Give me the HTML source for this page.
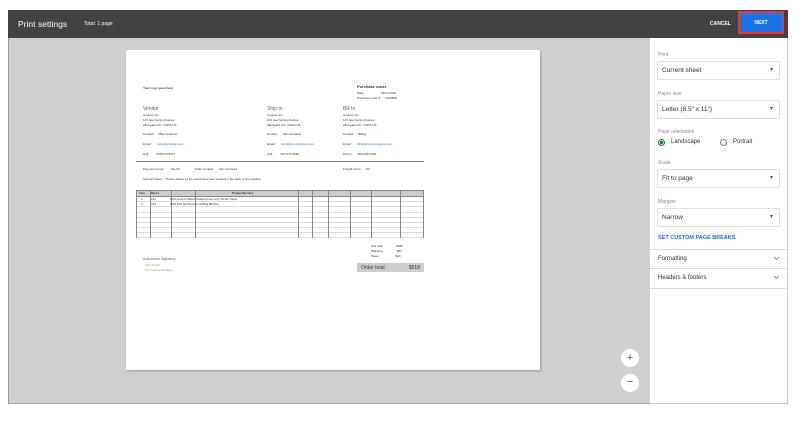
<!DOCTYPE html><html><head><style>
*{margin:0;padding:0;box-sizing:border-box}
body{width:801px;height:421px;background:#fff;font-family:"Liberation Sans",sans-serif;position:relative;overflow:hidden}
.a{position:absolute}
.t{font-size:3px;color:#333;white-space:nowrap}
.l{font-size:5px;color:#888}
.sel{position:absolute;left:657px;width:123px;height:19px;border:1px solid #e0e0e0;border-radius:2px;font-size:6.5px;color:#333;padding:5px 4px}
.sel:after{content:"▾";position:absolute;right:6px;top:4px;font-size:6px;color:#555}
</style></head><body>
<div class="a" style="left:8px;top:10px;width:780px;height:28px;background:#424242"></div>
<div class="a" style="left:18px;top:19px;color:#fff;font-size:8.5px">Print settings</div>
<div class="a" style="left:84px;top:21px;color:#fff;font-size:5px">Total: 1 page</div>
<div class="a" style="left:710px;top:21px;color:#fff;font-size:5px;font-weight:bold">CANCEL</div>
<div class="a" style="left:738px;top:11px;width:46px;height:23px;background:#1a73e8;border:2px solid #e53935;color:#fff;font-size:5px;font-weight:bold;display:flex;align-items:center;justify-content:center">NEXT</div>
<div class="a" style="left:8px;top:38px;width:642px;height:366px;background:#d0d0d0;border-left:1px solid #999;border-bottom:1px solid #aaa"></div>
<div class="a" style="left:650px;top:38px;width:138px;height:366px;background:#fff;border-right:1px solid #ccc;border-bottom:1px solid #ccc"></div>
<div class="a" style="left:126px;top:50px;width:414px;height:320px;background:#fff;box-shadow:1px 1px 2px #999"></div>
<div class="a t" style="left:143px;top:86px;font-weight:bold">Your Logo goes here</div>
<div class="a t" style="left:357px;top:84px;font-weight:bold;font-size:4px">Purchase order</div>
<div class="a t" style="left:357px;top:91px">Date:&nbsp;&nbsp;&nbsp;&nbsp;&nbsp;&nbsp;&nbsp;&nbsp;&nbsp;&nbsp;&nbsp;&nbsp;&nbsp;&nbsp;&nbsp;&nbsp;&nbsp;&nbsp;&nbsp; 04/17/2019</div>
<div class="a t" style="left:357px;top:96px">Purchase order #:&nbsp;&nbsp;&nbsp;&nbsp; 1365598</div>
<div class="a t" style="left:143px;top:106px;font-size:5px;color:#666">Vendor</div>
<div class="a t" style="left:267px;top:106px;font-size:5px;color:#666">Ship to</div>
<div class="a t" style="left:343px;top:106px;font-size:5px;color:#666">Bill to</div>
<div class="a t" style="left:143px;top:113px;line-height:5px">Amazon Inc.<br>123 new Spring Avenue<br>Allengairs,CO, 23494,US</div>
<div class="a t" style="left:267px;top:113px;line-height:5px">Amazon Inc.<br>123 new Spring Avenue<br>Allengairs,CO, 23494,US</div>
<div class="a t" style="left:343px;top:113px;line-height:5px">Amazon Inc.<br>123 new Spring Avenue<br>Allengairs,CO, 23494,US</div>
<div class="a t" style="left:143px;top:132px">Contact:&nbsp;&nbsp;&nbsp;&nbsp; Mike Andrews</div>
<div class="a t" style="left:267px;top:132px">Contact:&nbsp;&nbsp;&nbsp;&nbsp; John Andrews</div>
<div class="a t" style="left:343px;top:132px">Contact:&nbsp;&nbsp;&nbsp;&nbsp; Billing</div>
<div class="a t" style="left:143px;top:142px">Email:&nbsp;&nbsp;&nbsp;&nbsp;&nbsp;&nbsp; <span style="color:#36c">mike@amazon.com</span></div>
<div class="a t" style="left:267px;top:142px">Email:&nbsp;&nbsp;&nbsp;&nbsp;&nbsp;&nbsp; <span style="color:#36c">john@yourcompany.com</span></div>
<div class="a t" style="left:343px;top:142px">Email:&nbsp;&nbsp;&nbsp;&nbsp;&nbsp;&nbsp; <span style="color:#36c">billing@yourcompany.com</span></div>
<div class="a t" style="left:143px;top:152px">Cell:&nbsp;&nbsp;&nbsp;&nbsp;&nbsp;&nbsp;&nbsp;&nbsp; 568-679-5667</div>
<div class="a t" style="left:267px;top:152px">Cell:&nbsp;&nbsp;&nbsp;&nbsp;&nbsp;&nbsp;&nbsp;&nbsp; 567-675-4560</div>
<div class="a t" style="left:343px;top:152px">Phone:&nbsp;&nbsp;&nbsp;&nbsp;&nbsp; 580-665-5665</div>
<div class="a" style="left:136px;top:161px;width:288px;height:1px;background:#777"></div>
<div class="a t" style="left:143px;top:167px">Payment terms:&nbsp;&nbsp;&nbsp;&nbsp;&nbsp;&nbsp;&nbsp; Net 30&nbsp;&nbsp;&nbsp;&nbsp;&nbsp;&nbsp;&nbsp;&nbsp;&nbsp;&nbsp;&nbsp;&nbsp;&nbsp;&nbsp;&nbsp;&nbsp;&nbsp; Order Contact:&nbsp;&nbsp;&nbsp;&nbsp; John Andrews</div>
<div class="a t" style="left:343px;top:167px">Freight terms:&nbsp;&nbsp;&nbsp;&nbsp; NA</div>
<div class="a t" style="left:143px;top:177px">Special Notes:&nbsp;&nbsp;&nbsp; Please deliver to the warehouse door located in the back of the building</div>
<div class="a" style="left:136px;top:190px;width:288px;height:48px;border:0.5px solid #888">
<div style="height:6px;background:#ccc;border-bottom:0.5px solid #888"></div>
<div style="height:42px;background:repeating-linear-gradient(#fff 0 4.6px,#bbb 4.6px 5.1px)"></div>
</div>
<div class="a" style="left:150px;top:190px;width:1px;height:48px;background:#888"></div>
<div class="a" style="left:171px;top:190px;width:1px;height:48px;background:#888"></div>
<div class="a" style="left:195px;top:190px;width:1px;height:48px;background:#888"></div>
<div class="a" style="left:298px;top:190px;width:1px;height:48px;background:#888"></div>
<div class="a" style="left:312px;top:190px;width:1px;height:48px;background:#888"></div>
<div class="a" style="left:328px;top:190px;width:1px;height:48px;background:#888"></div>
<div class="a" style="left:350px;top:190px;width:1px;height:48px;background:#888"></div>
<div class="a" style="left:371px;top:190px;width:1px;height:48px;background:#888"></div>
<div class="a" style="left:400px;top:190px;width:1px;height:48px;background:#888"></div>
<div class="a t" style="left:139px;top:191px;font-size:2.8px;font-weight:bold">Line&nbsp;&nbsp;&nbsp;&nbsp;&nbsp;&nbsp;&nbsp; Item #</div>
<div class="a t" style="left:232px;top:191px;font-size:2.8px;font-weight:bold">Product/Service</div>
<div class="a t" style="left:141px;top:197px;font-size:2.8px;line-height:4.5px">1&nbsp;&nbsp;&nbsp;&nbsp;&nbsp;&nbsp;&nbsp;&nbsp;&nbsp;&nbsp; 123&nbsp;&nbsp;&nbsp;&nbsp;&nbsp;&nbsp;&nbsp;&nbsp;&nbsp;&nbsp;&nbsp;&nbsp;&nbsp;&nbsp;&nbsp;&nbsp;&nbsp; 1234 Amazon Basics Multipurpose Copy Printer Paper<br>2&nbsp;&nbsp;&nbsp;&nbsp;&nbsp;&nbsp;&nbsp;&nbsp;&nbsp;&nbsp; 124&nbsp;&nbsp;&nbsp;&nbsp;&nbsp;&nbsp;&nbsp;&nbsp;&nbsp;&nbsp;&nbsp;&nbsp;&nbsp;&nbsp;&nbsp;&nbsp;&nbsp; 1234 Pilot G2 Premium Rolling Ball Gel</div>
<div class="a t" style="left:371px;top:244px;line-height:5px">Sub total&nbsp;&nbsp;&nbsp;&nbsp;&nbsp;&nbsp;&nbsp;&nbsp;&nbsp;&nbsp;&nbsp;&nbsp;&nbsp;&nbsp;&nbsp; $465<br>Shipping&nbsp;&nbsp;&nbsp;&nbsp;&nbsp;&nbsp;&nbsp;&nbsp;&nbsp;&nbsp;&nbsp;&nbsp;&nbsp;&nbsp;&nbsp;&nbsp; $33<br>Taxes&nbsp;&nbsp;&nbsp;&nbsp;&nbsp;&nbsp;&nbsp;&nbsp;&nbsp;&nbsp;&nbsp;&nbsp;&nbsp;&nbsp;&nbsp;&nbsp;&nbsp;&nbsp;&nbsp; $20</div>
<div class="a" style="left:357px;top:263px;width:67px;height:9px;background:#ccc;font-size:5px;color:#333;padding:2px 4px">Order total<span style="float:right">$518</span></div>
<div class="a t" style="left:143px;top:257px;color:#4a5a9a;font-size:3.5px">Authorized Signatory</div>
<div class="a t" style="left:145px;top:263px;color:#999;font-style:italic">Mike Smith</div>
<div class="a t" style="left:145px;top:268px;color:#999;font-style:italic">Purchasing Manager</div>
<div class="a" style="left:621px;top:349px;width:18px;height:18px;border-radius:50%;background:#fff;text-align:center;line-height:18px;font-size:11px;color:#555">+</div>
<div class="a" style="left:621px;top:374px;width:18px;height:18px;border-radius:50%;background:#fff;text-align:center;line-height:17px;font-size:11px;color:#555">−</div>
<div class="a l" style="left:658px;top:52px">Print</div>
<div class="sel" style="top:61px">Current sheet</div>
<div class="a l" style="left:658px;top:91px">Paper size</div>
<div class="sel" style="top:100px">Letter (8.5" x 11")</div>
<div class="a l" style="left:658px;top:129px">Page orientation</div>
<div class="a" style="left:658px;top:139px;width:7px;height:7px;border-radius:50%;border:1px solid #188038;background:radial-gradient(#188038 1.6px,#fff 2px)"></div>
<div class="a" style="left:671px;top:139px;font-size:6px;color:#333">Landscape</div>
<div class="a" style="left:720px;top:139px;width:7px;height:7px;border-radius:50%;border:1px solid #888"></div>
<div class="a" style="left:733px;top:139px;font-size:6px;color:#333">Portrait</div>
<div class="a l" style="left:658px;top:160px">Scale</div>
<div class="sel" style="top:169px">Fit to page</div>
<div class="a l" style="left:658px;top:199px">Margins</div>
<div class="sel" style="top:208px">Narrow</div>
<div class="a" style="left:658px;top:235px;font-size:5.5px;color:#1a73e8;font-weight:bold">SET CUSTOM PAGE BREAKS</div>
<div class="a" style="left:650px;top:249px;width:137px;height:1px;background:#ddd"></div>
<div class="a" style="left:658px;top:256px;font-size:6px;color:#333">Formatting</div>
<svg class="a" style="left:773px;top:256px" width="7" height="5"><path d="M1 1l2.5 2.5L6 1" stroke="#777" fill="none" stroke-width="0.8"/></svg>
<div class="a" style="left:650px;top:268px;width:137px;height:1px;background:#ddd"></div>
<div class="a" style="left:658px;top:275px;font-size:6px;color:#333">Headers &amp; footers</div>
<svg class="a" style="left:773px;top:275px" width="7" height="5"><path d="M1 1l2.5 2.5L6 1" stroke="#777" fill="none" stroke-width="0.8"/></svg>
<div class="a" style="left:650px;top:288px;width:137px;height:1px;background:#ddd"></div>
</body></html>
